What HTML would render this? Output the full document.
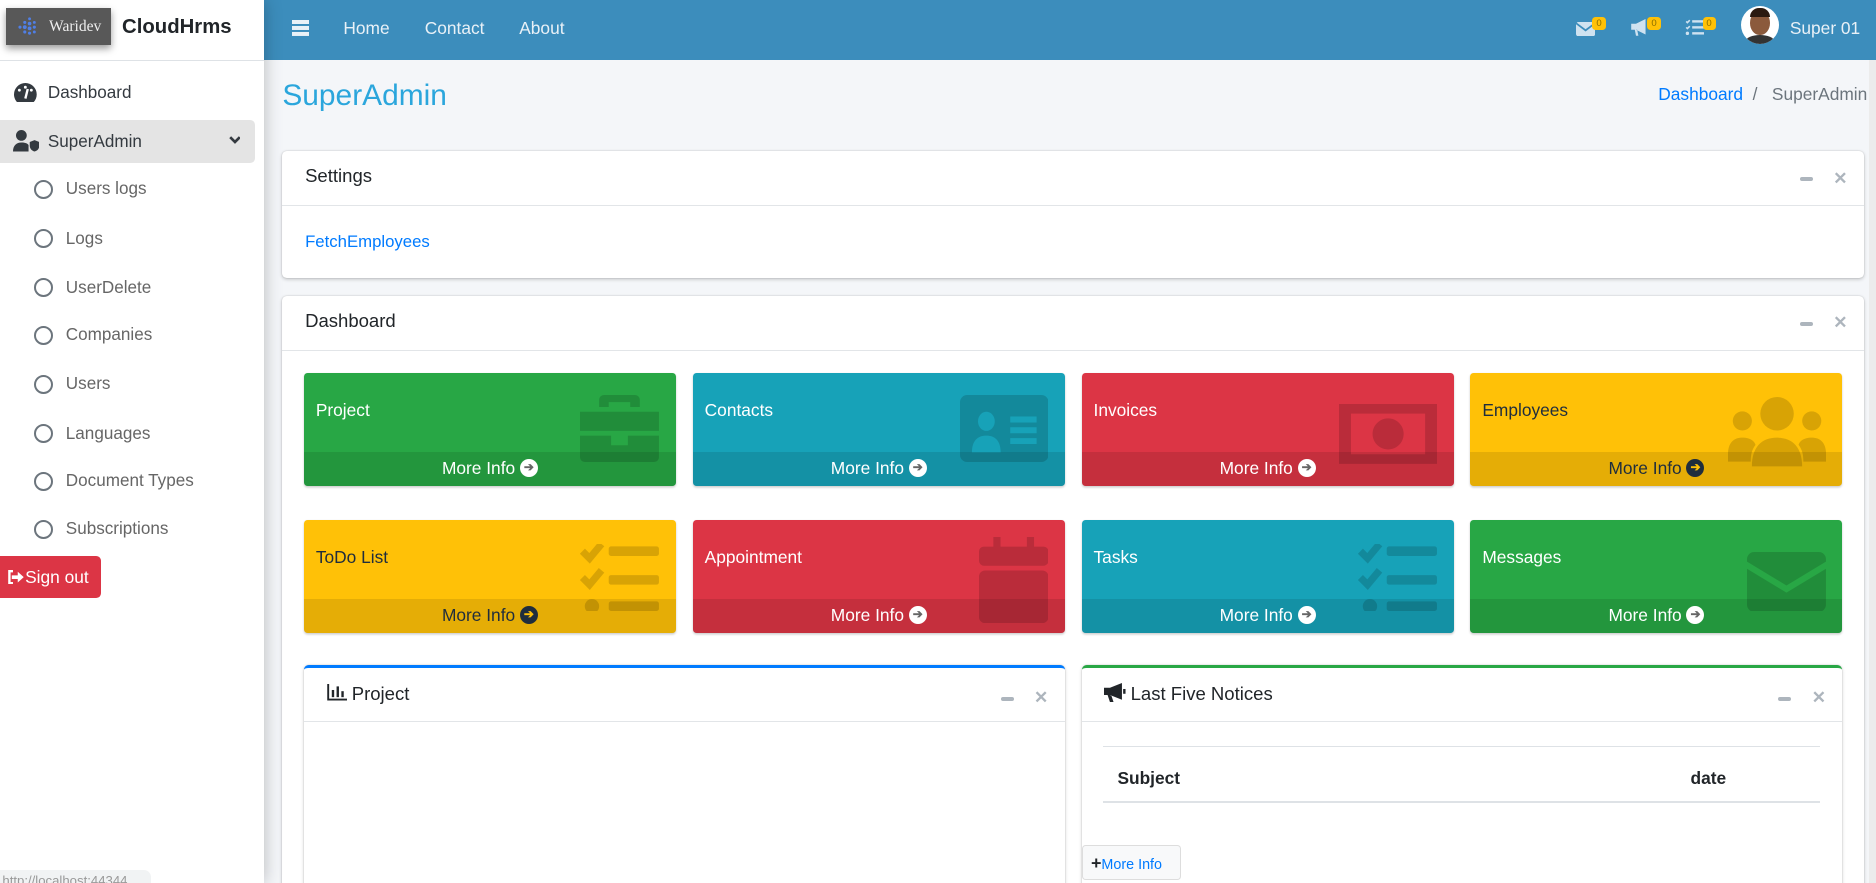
<!DOCTYPE html>
<html><head><meta charset="utf-8">
<style>
*{box-sizing:border-box;margin:0;padding:0}
html,body{width:1876px;height:883px;overflow:hidden}
body{font-family:"Liberation Sans",sans-serif;background:#f4f6f9;}
#w{zoom:1.19643;width:1568px;height:738px;position:relative;overflow:hidden;background:#f4f6f9}
.a{position:absolute}
#side{left:0;top:0;width:221px;height:738px;background:#fff;box-shadow:0 0 14px rgba(0,0,0,.25);z-index:5}
#top{left:221px;top:0;width:1347px;height:50px;background:#3c8dbc;color:#e9f1f7;font-size:14.5px}
.sub{position:absolute;left:28px;font-size:14.3px;color:#666;display:flex;align-items:center}
.sub i{display:inline-block;width:16px;height:16px;border:2px solid #6c757d;border-radius:50%;margin-right:11px}
.card{background:#fff;border-radius:4px;box-shadow:0 0 1px rgba(0,0,0,.2),0 1px 3px rgba(0,0,0,.2)}
.ch{height:46px;border-bottom:1px solid #e2e5e8;font-size:15.5px;color:#212529;padding:12px 19px}
.tools{position:absolute;right:14px;top:14px;color:#adb5bd;font-size:14px;font-weight:bold}
.tools b{display:inline-block;width:11px;height:3px;border-radius:2px;background:#adb5bd;vertical-align:middle;margin-right:17px}
.sb{position:absolute;width:311px;height:94px;border-radius:3px;color:#fff;overflow:hidden;box-shadow:0 1px 2px rgba(0,0,0,.2)}
.sb .t{position:absolute;left:10px;top:22px;font-size:14.5px}
.sb .f{position:absolute;left:0;bottom:0;width:100%;height:28px;background:rgba(0,0,0,.1);text-align:center;font-size:14.5px;line-height:28px}
.sb svg.ic{position:absolute;right:14px;top:18px;opacity:.15}
.arr{display:inline-block;width:15px;height:15px;border-radius:50%;background:#fff;vertical-align:-2px;position:relative;color:#333;font-size:11px;line-height:15px;font-weight:bold;text-align:center}
.sb .arr{color:inherit}
.sb .arr::after{content:"➔";position:absolute;left:0;right:0;top:0;font-size:10px}
.sb:not(.y) .arr{color:#666}
.y .arr{background:#1f2d3d;color:#ffc107}
.badge{position:absolute;background:#ffc107;color:#8a6d00;font-size:8px;border-radius:3px;width:11px;height:11px;text-align:center;line-height:11px}
</style></head><body><div id="w">

<div id="top" class="a">
 <div class="a" style="left:23px;top:17px;width:14px;height:3px;background:#e9f1f7;box-shadow:0 5px 0 #e9f1f7,0 10px 0 #e9f1f7"></div>
 <div class="a" style="left:66px;top:15px">Home</div>
 <div class="a" style="left:134px;top:15px">Contact</div>
 <div class="a" style="left:213px;top:15px">About</div>
 <svg class="a" style="left:1096px;top:18px" width="16" height="12" viewBox="0 0 16 12"><rect width="16" height="12" rx="2" fill="#cfe2f0"/><path d="M0 1l8 6 8-6" stroke="#3c8dbc" stroke-width="1.5" fill="none"/></svg>
 <div class="badge" style="left:1110px;top:14px">0</div>
 <svg class="a" style="left:1141px;top:16px" width="16" height="14" viewBox="0 0 16 14"><path d="M1 4h4l8-4v13l-8-4H1z M4 9l1 5h2l-1-5" fill="#cfe2f0"/></svg>
 <div class="badge" style="left:1156px;top:14px">0</div>
 <svg class="a" style="left:1187px;top:16px" width="16" height="14" viewBox="0 0 16 14"><path d="M1 2l1 1 2-2M1 7l1 1 2-2" stroke="#cfe2f0" stroke-width="1.3" fill="none"/><circle cx="2" cy="12" r="1.4" fill="#cfe2f0"/><rect x="6" y="1" width="10" height="2" fill="#cfe2f0"/><rect x="6" y="6" width="10" height="2" fill="#cfe2f0"/><rect x="6" y="11" width="10" height="2" fill="#cfe2f0"/></svg>
 <div class="badge" style="left:1202px;top:14px">0</div>
 <div class="a" style="left:1234px;top:5px;width:32px;height:32px;border-radius:50%;background:#fff;overflow:hidden">
  <div class="a" style="left:8px;top:4px;width:16px;height:20px;border-radius:50%;background:#8b5a3c"></div>
  <div class="a" style="left:8px;top:2px;width:16px;height:7px;border-radius:8px 8px 0 0;background:#2b1a10"></div>
  <div class="a" style="left:4px;top:24px;width:24px;height:10px;border-radius:50% 50% 0 0;background:#333"></div>
 </div>
 <div class="a" style="left:1275px;top:15px">Super 01</div>
</div>

<div id="side" class="a">
 <div class="a" style="left:5px;top:7px;width:88px;height:31px;background:#585858;box-shadow:0 3px 6px rgba(0,0,0,.4);color:#eee;font-family:'Liberation Serif',serif;font-size:13px;padding:8px 0 0 36px">Waridev</div>
 <svg class="a" style="left:12px;top:12px" width="22" height="22"><g fill="#4f7fe6"><circle cx="5" cy="11" r="1.3"/><circle cx="9" cy="7" r="1.3"/><circle cx="9" cy="11" r="1.6"/><circle cx="9" cy="15" r="1.3"/><circle cx="13" cy="4" r="1.2"/><circle cx="13" cy="8" r="1.5"/><circle cx="13" cy="12" r="1.6"/><circle cx="13" cy="16" r="1.3"/><circle cx="17" cy="7" r="1.2"/><circle cx="17" cy="11" r="1.3"/><circle cx="17" cy="15" r="1.2"/></g></svg>
 <div class="a" style="left:102px;top:13px;font-size:17px;font-weight:bold;color:#212529">CloudHrms</div>
 <div class="a" style="left:0;top:50px;width:221px;height:1px;background:#dee2e6"></div>
 <svg class="a" style="left:12px;top:69px" width="19" height="16" viewBox="0 0 19 16"><path d="M9.5 0A9.5 9.5 0 0 0 0 9.5c0 2.5 1 4.8 2.6 6.5h13.8A9.4 9.4 0 0 0 19 9.5 9.5 9.5 0 0 0 9.5 0z" fill="#343a40"/><circle cx="9.5" cy="3.5" r="1.2" fill="#fff"/><circle cx="4.5" cy="6" r="1.2" fill="#fff"/><circle cx="14.5" cy="6" r="1.2" fill="#fff"/><path d="M9.5 13l2-8" stroke="#fff" stroke-width="2"/></svg>
 <div class="a" style="left:40px;top:69px;font-size:14.3px;color:#343a40">Dashboard</div>
 <div class="a" style="left:0;top:100px;width:213px;height:36px;background:#e4e4e4;border-radius:0 4px 4px 0"></div>
 <svg class="a" style="left:11px;top:109px" width="22" height="18" viewBox="0 0 22 18"><circle cx="7" cy="4.5" r="4.5" fill="#343a40"/><path d="M0 18c0-5 3-7.5 7-7.5s5 1 6 2V18z" fill="#343a40"/><path d="M14 10l4-1.5 4 1.5v3c0 3-2 4.5-4 5-2-.5-4-2-4-5z" fill="#343a40"/></svg>
 <div class="a" style="left:40px;top:110px;font-size:14.3px;color:#343a40">SuperAdmin</div>
 <svg class="a" style="left:191px;top:114px" width="10" height="7"><path d="M1 1l4 4 4-4" stroke="#343a40" stroke-width="2.2" fill="none"/></svg>
 <div class="sub" style="top:150px"><i></i>Users logs</div>
 <div class="sub" style="top:191px"><i></i>Logs</div>
 <div class="sub" style="top:232px"><i></i>UserDelete</div>
 <div class="sub" style="top:272px"><i></i>Companies</div>
 <div class="sub" style="top:313px"><i></i>Users</div>
 <div class="sub" style="top:354px"><i></i>Languages</div>
 <div class="sub" style="top:394px"><i></i>Document Types</div>
 <div class="sub" style="top:434px"><i></i>Subscriptions</div>
 <div class="a" style="left:0;top:465px;width:84px;height:35px;background:#dc3545;border-radius:0 4px 4px 0;color:#fff;font-size:14.5px;padding:9px 0 0 6px">
  <svg width="15" height="12" viewBox="0 0 15 12" style="vertical-align:-1px"><path d="M5 1H2v10h3" stroke="#fff" stroke-width="2" fill="none"/><path d="M4 4.5h5V1.5l5 4.5-5 4.5V7.5H4z" fill="#fff"/></svg>Sign out</div>
 <div class="a" style="left:-4px;top:727px;width:130px;height:20px;background:#f1f3f4;border-radius:0 6px 0 0;color:#999;font-size:11px;padding:3px 6px">http://localhost:44344</div>
</div>

<div class="a" style="left:236px;top:66px;font-size:25px;color:#2ba6dc">SuperAdmin</div>
<div class="a" style="left:1386px;top:70px;font-size:14.5px;color:#6c757d"><span style="color:#007bff">Dashboard</span>&nbsp;&nbsp;/&nbsp;&nbsp;&nbsp;SuperAdmin</div>

<div class="a card" style="left:236px;top:126px;width:1322px;height:106px">
 <div class="ch">Settings</div><div class="tools"><b></b>✕</div>
 <div class="a" style="left:19px;top:68px;font-size:14px;color:#007bff">FetchEmployees</div>
</div>

<div class="a card" style="left:236px;top:247px;width:1322px;height:520px">
 <div class="ch">Dashboard</div><div class="tools"><b></b>✕</div>
</div>

<!-- row 1 -->
<div class="sb" style="left:254px;top:312px;background:#28a745"><div class="t">Project</div>
 <svg class="ic" width="66" height="56" viewBox="0 0 66 56"><path d="M20 0h26a4 4 0 0 1 4 4v6H42V6H24v4H16V4a4 4 0 0 1 4-4z M0 14h66v16H0z M0 34h26v8h14v-8h26v18a4 4 0 0 1-4 4H4a4 4 0 0 1-4-4z" fill="#000"/></svg>
 <div class="f">More Info <span class="arr"></span></div></div>
<div class="sb" style="left:579px;top:312px;background:#17a2b8"><div class="t">Contacts</div>
 <svg class="ic" width="74" height="56" viewBox="0 0 74 56"><path d="M6 0h62a6 6 0 0 1 6 6v44a6 6 0 0 1-6 6H6a6 6 0 0 1-6-6V6a6 6 0 0 1 6-6z M22 14a7 8 0 1 0 0.1 0z M10 48c0-10 5-14 12-14s12 4 12 14z M42 18h22v5H42z M42 27h22v5H42z M42 36h22v5H42z" fill="#000" fill-rule="evenodd"/></svg>
 <div class="f">More Info <span class="arr"></span></div></div>
<div class="sb" style="left:904px;top:312px;background:#dc3545"><div class="t">Invoices</div>
 <svg class="ic" width="82" height="50" viewBox="0 0 82 50" style="top:26px"><path d="M0 0h82v50H0z M10 8v34h62V8z M41 12a13 13 0 1 0 .1 0z" fill="#000" fill-rule="evenodd"/></svg>
 <div class="f">More Info <span class="arr"></span></div></div>
<div class="sb y" style="left:1229px;top:312px;background:#ffc107;color:#1f2d3d"><div class="t">Employees</div>
 <svg class="ic" width="82" height="58" viewBox="0 0 82 58" style="right:14px;top:20px"><circle cx="41" cy="14" r="14" fill="#000"/><circle cx="12" cy="20" r="8" fill="#000"/><circle cx="70" cy="20" r="8" fill="#000"/><path d="M20 58c0-16 8-24 21-24s21 8 21 24z M0 48c0-10 5-14 12-14s10 3 11 6c-3 4-4 8-4 14H0z M82 48c0-10-5-14-12-14s-10 3-11 6c3 4 4 8 4 14h19z" fill="#000"/></svg>
 <div class="f">More Info <span class="arr"></span></div></div>

<!-- row 2 -->
<div class="sb y" style="left:254px;top:435px;background:#ffc107;color:#1f2d3d"><div class="t">ToDo List</div>
 <svg class="ic" width="66" height="56" viewBox="0 0 66 56" style="top:20px"><path d="M2 6l6 6 10-12M2 28l6 6 10-12" stroke="#000" stroke-width="6" fill="none"/><circle cx="10" cy="52" r="6" fill="#000"/><rect x="24" y="2" width="42" height="8" rx="2"/><rect x="24" y="26" width="42" height="8" rx="2"/><rect x="24" y="48" width="42" height="8" rx="2"/></svg>
 <div class="f">More Info <span class="arr"></span></div></div>
<div class="sb" style="left:579px;top:435px;background:#dc3545"><div class="t">Appointment</div>
 <svg class="ic" width="58" height="72" viewBox="0 0 58 72" style="top:14px"><rect x="12" y="0" width="6" height="10"/><rect x="40" y="0" width="6" height="10"/><rect x="0" y="8" width="58" height="16" rx="4"/><rect x="0" y="28" width="58" height="44" rx="5"/></svg>
 <div class="f">More Info <span class="arr"></span></div></div>
<div class="sb" style="left:904px;top:435px;background:#17a2b8"><div class="t">Tasks</div>
 <svg class="ic" width="66" height="56" viewBox="0 0 66 56" style="top:20px"><path d="M2 6l6 6 10-12M2 28l6 6 10-12" stroke="#000" stroke-width="6" fill="none"/><circle cx="10" cy="52" r="6" fill="#000"/><rect x="24" y="2" width="42" height="8" rx="2"/><rect x="24" y="26" width="42" height="8" rx="2"/><rect x="24" y="48" width="42" height="8" rx="2"/></svg>
 <div class="f">More Info <span class="arr"></span></div></div>
<div class="sb" style="left:1229px;top:435px;background:#28a745"><div class="t">Messages</div>
 <svg class="ic" width="66" height="50" viewBox="0 0 66 50" style="top:26px"><path d="M6 0h54a6 6 0 0 1 6 6v2L33 28 0 8V6a6 6 0 0 1 6-6z M0 14l33 20 33-20v30a6 6 0 0 1-6 6H6a6 6 0 0 1-6-6z" fill="#000"/></svg>
 <div class="f">More Info <span class="arr"></span></div></div>

<!-- bottom cards -->
<div class="a card" style="left:254px;top:556px;width:636px;height:200px;border-top:3px solid #007bff">
 <div class="ch" style="height:45px;padding-left:19px;font-size:15.5px"><svg width="17" height="14" viewBox="0 0 17 14" style="vertical-align:-1px;margin-right:4px"><path d="M1 0v13h16" stroke="#212529" stroke-width="1.6" fill="none"/><rect x="4" y="5" width="2" height="6" fill="#212529"/><rect x="8" y="2" width="2" height="9" fill="#212529"/><rect x="12" y="6" width="2" height="5" fill="#212529"/></svg>Project</div>
 <div class="tools" style="top:16px"><b></b>✕</div>
</div>
<div class="a card" style="left:904px;top:556px;width:636px;height:200px;border-top:3px solid #28a745">
 <div class="ch" style="height:45px;padding-left:19px;font-size:15.5px"><svg width="18" height="16" viewBox="0 0 18 16" style="vertical-align:-2px;margin-right:4px"><path d="M0 4h5l10-4v14L5 10H0z M3 10l2 6h3l-2-6" fill="#212529"/><rect x="16" y="5" width="2" height="4" fill="#212529"/></svg>Last Five Notices</div>
 <div class="tools" style="top:16px"><b></b>✕</div>
 <div class="a" style="left:18px;top:65px;width:599px;height:1px;background:#dee2e6"></div>
 <div class="a" style="left:30px;top:83px;font-size:14.5px;font-weight:bold;color:#212529">Subject</div>
 <div class="a" style="left:509px;top:83px;font-size:14.5px;font-weight:bold;color:#212529">date</div>
 <div class="a" style="left:18px;top:111px;width:599px;height:2px;background:#dee2e6"></div>
 <div class="a" style="left:0;top:148px;width:83px;height:29px;background:#f8f9fa;border:1px solid #ddd;border-radius:3px;font-size:12px;color:#007bff;padding:6px 0 0 7px"><b style="color:#212529;font-size:15px">+</b>More Info</div>
</div>

<div class="a" style="left:1562px;top:50px;width:6px;height:688px;background:#ececec"></div>
</div></body></html>
